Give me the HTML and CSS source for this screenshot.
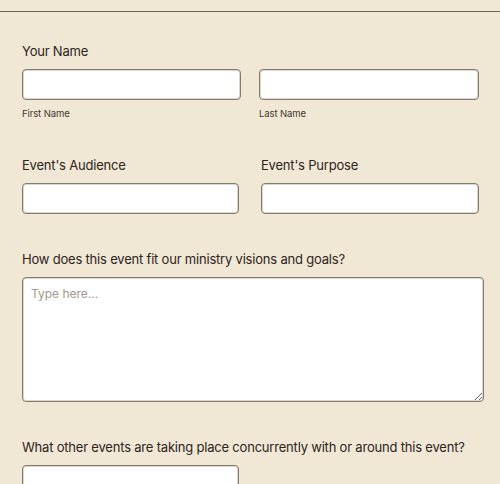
FILE: index.html
```html
<!DOCTYPE html>
<html lang="en">
<head>
    <meta charset="UTF-8">
    <meta name="viewport" content="width=device-width, initial-scale=1.0">
    <title>Event Request</title>
    <link rel="stylesheet" href="styles.css">
</head>
<body>
    <div class="topbar"></div>
    <form class="form">
        <div class="field field-name">
            <label class="label">Your Name</label>
            <div class="row row-name">
                <div>
                    <input type="text" class="input">
                    <div class="sublabel">First Name</div>
                </div>
                <div>
                    <input type="text" class="input">
                    <div class="sublabel">Last Name</div>
                </div>
            </div>
        </div>

        <div class="row row-pair">
            <div class="field">
                <label class="label">Event's Audience</label>
                <input type="text" class="input">
            </div>
            <div class="field">
                <label class="label">Event's Purpose</label>
                <input type="text" class="input">
            </div>
        </div>

        <div class="field">
            <label class="label">How does this event fit our ministry visions and goals?</label>
            <textarea class="textarea" placeholder="Type here..."></textarea>
        </div>

        <div class="field">
            <label class="label">What other events are taking place concurrently with or around this event?</label>
            <input type="text" class="input input-half">
        </div>
    </form>
</body>
</html>
```

FILE: styles.css
```css
* {
    margin: 0;
    padding: 0;
    box-sizing: border-box;
    font-family: 'Inter', 'Liberation Sans', sans-serif;
}

body {
    background-color: #f0e7d5;
    color: #2e241c;
    overflow: hidden;
}

.topbar {
    height: 12px;
    border-bottom: 1px solid #6f6558;
}

.form {
    padding: 30px 0 0 22px;
}

.field {
    margin-bottom: 36px;
}

.label {
    display: block;
    font-size: 13px;
    line-height: 18px;
    letter-spacing: -0.2px;
    margin-bottom: 9px;
    color: #2e241c;
}

.row {
    display: grid;
}

.row-name {
    grid-template-columns: 219px 220px;
    column-gap: 18px;
}

.row-pair {
    grid-template-columns: 217px 218px;
    column-gap: 22px;
}

.input {
    display: block;
    width: 100%;
    height: 31px;
    background: #fff;
    border: 1px solid #857a6c;
    border-radius: 4px;
    box-shadow: inset 0 0 0 1px #ddd6cc;
    outline: none;
}

.input-half {
    width: 217px;
}

.sublabel {
    font-size: 9.5px;
    line-height: 12px;
    letter-spacing: -0.1px;
    margin-top: 8px;
    color: #43382f;
}

.textarea {
    display: block;
    width: 462px;
    height: 125px;
    background: #fff;
    border: 1px solid #857a6c;
    border-radius: 4px;
    box-shadow: inset 0 0 0 1px #ddd6cc;
    padding: 8px 8px;
    font-size: 12px;
    line-height: 16px;
    color: #2e241c;
    outline: none;
}

.textarea::placeholder {
    color: #a3988b;
}
```
